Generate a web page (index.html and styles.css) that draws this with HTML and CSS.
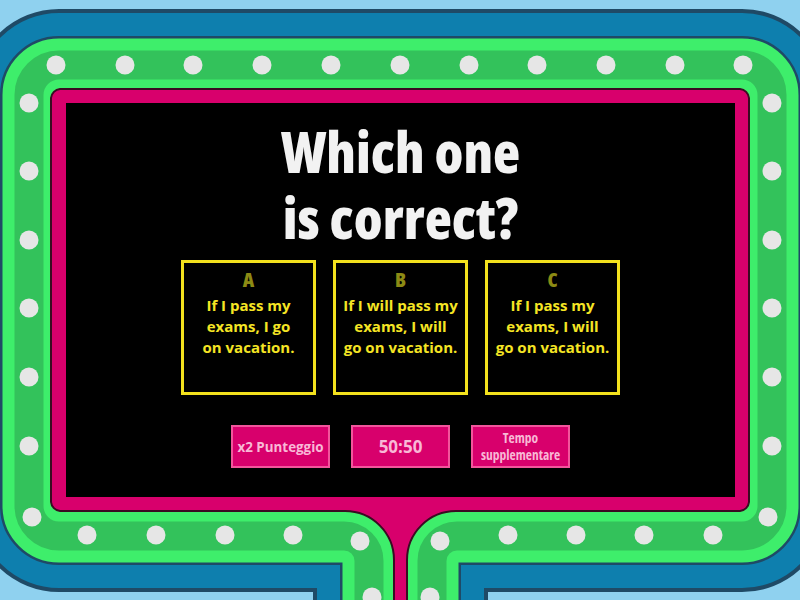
FILE: index.html
```html
<!DOCTYPE html>
<html>
<head>
<meta charset="utf-8">
<link rel="stylesheet" href="styles.css">
</head>
<body>
<div class="stage">
  <svg class="frame" width="800" height="600" viewBox="0 0 800 600">
    <path class="ring ring-navy" d="M369 640 L369 561 A25 25 0 0 0 344 536 L59 536 A30 30 0 0 1 29 506 L29 95 A30 30 0 0 1 59 65 L742 65 A30 30 0 0 1 772 95 L772 506 A30 30 0 0 1 742 536 L457 536 A25 25 0 0 0 432 561 L432 640"/>
    <path class="ring ring-blue" d="M369 640 L369 561 A25 25 0 0 0 344 536 L59 536 A30 30 0 0 1 29 506 L29 95 A30 30 0 0 1 59 65 L742 65 A30 30 0 0 1 772 95 L772 506 A30 30 0 0 1 742 536 L457 536 A25 25 0 0 0 432 561 L432 640"/>
    <path class="ring ring-line" d="M369 640 L369 561 A25 25 0 0 0 344 536 L59 536 A30 30 0 0 1 29 506 L29 95 A30 30 0 0 1 59 65 L742 65 A30 30 0 0 1 772 95 L772 506 A30 30 0 0 1 742 536 L457 536 A25 25 0 0 0 432 561 L432 640"/>
    <path class="ring ring-light" d="M369 640 L369 561 A25 25 0 0 0 344 536 L59 536 A30 30 0 0 1 29 506 L29 95 A30 30 0 0 1 59 65 L742 65 A30 30 0 0 1 772 95 L772 506 A30 30 0 0 1 742 536 L457 536 A25 25 0 0 0 432 561 L432 640"/>
    <path class="ring ring-dark" d="M369 640 L369 561 A25 25 0 0 0 344 536 L59 536 A30 30 0 0 1 29 506 L29 95 A30 30 0 0 1 59 65 L742 65 A30 30 0 0 1 772 95 L772 506 A30 30 0 0 1 742 536 L457 536 A25 25 0 0 0 432 561 L432 640"/>
    <g class="dots">
      <circle cx="56" cy="65" r="9.5"/><circle cx="125" cy="65" r="9.5"/><circle cx="193" cy="65" r="9.5"/>
      <circle cx="262" cy="65" r="9.5"/><circle cx="331" cy="65" r="9.5"/><circle cx="400" cy="65" r="9.5"/>
      <circle cx="469" cy="65" r="9.5"/><circle cx="537" cy="65" r="9.5"/><circle cx="606" cy="65" r="9.5"/>
      <circle cx="675" cy="65" r="9.5"/><circle cx="743" cy="65" r="9.5"/>
      <circle cx="29" cy="103" r="9.5"/><circle cx="29" cy="171" r="9.5"/><circle cx="29" cy="240" r="9.5"/>
      <circle cx="29" cy="308" r="9.5"/><circle cx="29" cy="377" r="9.5"/><circle cx="29" cy="446" r="9.5"/>
      <circle cx="32" cy="517" r="9.5"/>
      <circle cx="772" cy="103" r="9.5"/><circle cx="772" cy="171" r="9.5"/><circle cx="772" cy="240" r="9.5"/>
      <circle cx="772" cy="308" r="9.5"/><circle cx="772" cy="377" r="9.5"/><circle cx="772" cy="446" r="9.5"/>
      <circle cx="768" cy="517" r="9.5"/>
      <circle cx="87" cy="535" r="9.5"/><circle cx="156" cy="535" r="9.5"/><circle cx="225" cy="535" r="9.5"/>
      <circle cx="293" cy="535" r="9.5"/><circle cx="360" cy="541" r="9.5"/><circle cx="372" cy="597" r="9.5"/>
      <circle cx="440" cy="541" r="9.5"/><circle cx="508" cy="535" r="9.5"/><circle cx="576" cy="535" r="9.5"/>
      <circle cx="644" cy="535" r="9.5"/><circle cx="713" cy="535" r="9.5"/><circle cx="430" cy="597" r="9.5"/>
    </g>
    <path class="pink" d="M60 89 L740 89 A10 10 0 0 1 749 98 L749 502 A10 10 0 0 1 740 511 L456 511 A49 49 0 0 0 407 560 L407 640 L394 640 L394 560 A49 49 0 0 0 345 511 L60 511 A10 10 0 0 1 51 502 L51 98 A10 10 0 0 1 60 89 Z"/>
  </svg>

  <div class="screen">
    <h1 class="title"><span class="title-line">Which one</span><span class="title-line">is correct?</span></h1>
    <div class="cards">
      <div class="card">
        <div class="card-letter">A</div>
        <div class="card-text">If I pass my<br>exams, I go<br>on vacation.</div>
      </div>
      <div class="card">
        <div class="card-letter">B</div>
        <div class="card-text">If I will pass my<br>exams, I will<br>go on vacation.</div>
      </div>
      <div class="card">
        <div class="card-letter">C</div>
        <div class="card-text">If I pass my<br>exams, I will<br>go on vacation.</div>
      </div>
    </div>
    <div class="powerups">
      <div class="btn btn-small">x2 Punteggio</div>
      <div class="btn btn-big">50:50</div>
      <div class="btn btn-tiny">Tempo<br>supplementare</div>
    </div>
  </div>
</div>
</body>
</html>
```

FILE: styles.css
```css
html, body {
  margin: 0;
  padding: 0;
  background: #8fd1ef;
}

.stage {
  position: relative;
  width: 800px;
  height: 600px;
  overflow: hidden;
  background: #8fd1ef;
  font-family: "Open Sans", "DejaVu Sans", sans-serif;
  font-stretch: 75%;
  font-weight: 700;
}

.frame {
  position: absolute;
  left: 0;
  top: 0;
}

.ring {
  fill: none;
  stroke-linejoin: round;
}
.ring-navy { stroke: #1f4a66; stroke-width: 112px; }
.ring-blue { stroke: #0e7fae; stroke-width: 104px; }
.ring-line { stroke: #1f4a66; stroke-width: 58px; }
.ring-light { stroke: #3eee6b; stroke-width: 53px; }
.ring-dark { stroke: #33c25b; stroke-width: 29px; }
.dots circle { fill: #e6e6e6; }
.pink {
  fill: #d8006c;
  stroke: #3a0c22;
  stroke-width: 2px;
}

.screen {
  position: absolute;
  left: 66px;
  top: 103px;
  width: 669px;
  height: 394px;
  background: #000;
  display: flex;
  flex-direction: column;
  align-items: center;
}

.title {
  margin: 15px 0 0;
  font-weight: 800;
  font-size: 56px;
  color: #f2f2f2;
  text-align: center;
}

.title-line {
  display: block;
  height: 66px;
  line-height: 66px;
}

.cards {
  display: flex;
  gap: 17px;
  margin-top: 10px;
}

.card {
  box-sizing: border-box;
  width: 135px;
  height: 135px;
  border: 3px solid #f3e11d;
  padding-top: 6px;
  text-align: center;
}

.card-letter {
  font-size: 20px;
  line-height: 22px;
  font-weight: 800;
  color: #8c8a14;
}

.card-text {
  margin-top: 4px;
  font-size: 15px;
  line-height: 21px;
  font-stretch: 92%;
  color: #f5e524;
}

.powerups {
  display: flex;
  gap: 21px;
  margin-top: 30px;
}

.btn {
  box-sizing: border-box;
  width: 99px;
  height: 43px;
  background: #d8006c;
  border: 2px solid #f2559c;
  color: #f8b8d6;
  display: flex;
  align-items: center;
  justify-content: center;
  text-align: center;
  white-space: nowrap;
}
.btn-small { font-size: 13.4px; font-stretch: 92%; }
.btn-big { font-size: 17px; font-stretch: 92%; }
.btn-tiny { font-size: 13.5px; line-height: 16.5px; font-stretch: 75%; }
```
